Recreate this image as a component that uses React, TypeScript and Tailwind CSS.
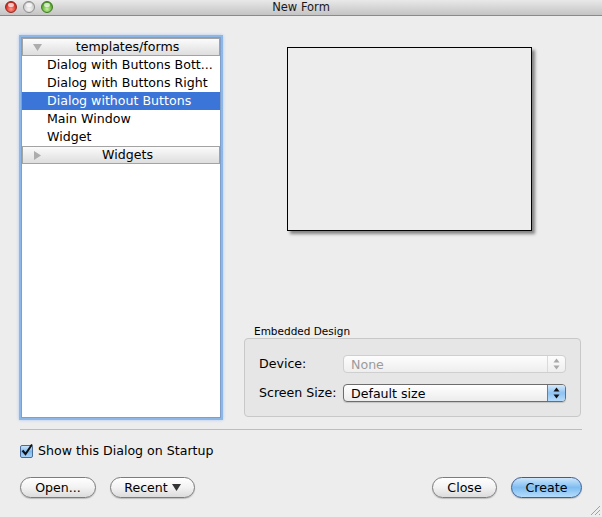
import React from 'react';

const font = { fontFamily: '"DejaVu Sans", "Liberation Sans", sans-serif' };

const Light = ({ tone }: { tone: 'red' | 'grey' | 'green' }) => {
  const bg =
    tone === 'red'
      ? 'bg-[radial-gradient(circle_at_50%_70%,#ff9a8c_0%,#e0362b_55%,#9e1a12_100%)] border-[#8e2a22]'
      : tone === 'green'
      ? 'bg-[radial-gradient(circle_at_50%_70%,#c8f2a0_0%,#66b23a_55%,#3b7a1c_100%)] border-[#3f7a25]'
      : 'bg-[radial-gradient(circle_at_50%_70%,#f4f4f4_0%,#d2d2d2_60%,#a8a8a8_100%)] border-[#8c8c8c]';
  return (
    <div className={`relative w-[12px] h-[12px] rounded-full border ${bg}`}>
      <div className="absolute left-[2px] top-[1px] w-[6px] h-[4px] rounded-full bg-white/70" />
    </div>
  );
};

const Triangle = ({ open }: { open: boolean }) => (
  <svg width="9" height="9" viewBox="0 0 9 9" className="absolute left-[10px] top-[4px]">
    {open ? <polygon points="0,1 9,1 4.5,8" fill="#adadad" /> : <polygon points="1,0 8,4.5 1,9" fill="#adadad" />}
  </svg>
);

const GroupHeader = ({ label, open }: { label: string; open: boolean }) => (
  <div className="relative h-[18px] border border-[#a3a3a3] bg-gradient-to-b from-[#fbfbfb] to-[#dedede] pl-[13px] text-[12.6px] leading-[16px] text-center text-black">
    <Triangle open={open} />
    {label}
  </div>
);

const Row = ({ label, selected }: { label: string; selected?: boolean }) => (
  <div
    className={`h-[18px] pl-[25px] pr-[4px] text-[12.6px] leading-[18px] whitespace-nowrap overflow-hidden ${
      selected ? 'bg-[#3b75d7] text-white' : 'text-black'
    }`}
  >
    {label}
  </div>
);

const Arrows = ({ color }: { color: string }) => (
  <svg width="7" height="12" viewBox="0 0 7 12">
    <polygon points="3.5,0.5 6.5,4.5 0.5,4.5" fill={color} />
    <polygon points="0.5,7.5 6.5,7.5 3.5,11.5" fill={color} />
  </svg>
);

const Combo = ({ value, disabled }: { value: string; disabled?: boolean }) => (
  <div
    className={`flex h-[18px] w-[223px] rounded-[4px] border overflow-hidden ${
      disabled
        ? 'border-[#cfcfcf] bg-gradient-to-b from-[#fdfdfd] to-[#eeeeee]'
        : 'border-[#6d6d6d] bg-gradient-to-b from-white to-[#ececec] shadow-[0_1px_1px_rgba(0,0,0,0.15)]'
    }`}
  >
    <div className={`flex-1 pl-[7px] text-[12.6px] leading-[17px] ${disabled ? 'text-[#9b9b9b]' : 'text-black'}`}>
      {value}
    </div>
    <div
      className={`w-[18px] flex items-center justify-center border-l ${
        disabled
          ? 'border-[#dadada]'
          : 'border-[#5a7fb0] bg-gradient-to-b from-[#d4e9fb] via-[#8fc3f2] to-[#b6dcfb]'
      }`}
    >
      <Arrows color={disabled ? '#a8a8a8' : '#111111'} />
    </div>
  </div>
);

const AquaButton = ({ label, primary, width, children }: { label: string; primary?: boolean; width: string; children?: React.ReactNode }) => (
  <button
    className={`${width} h-[21px] rounded-full border text-[12.6px] leading-[19px] text-black flex items-center justify-center gap-[4px] ${
      primary
        ? 'border-[#3c5f93] bg-gradient-to-b from-[#cde6fb] via-[#7ebdf1] to-[#b5dcfa]'
        : 'border-[#7c7c7c] bg-gradient-to-b from-white via-[#f2f2f2] to-[#dcdcdc]'
    } shadow-[0_1px_1px_rgba(0,0,0,0.2)]`}
  >
    {label}
    {children}
  </button>
);

const App: React.FC = () => {
  return (
    <div className="w-[602px] h-[517px] bg-[#ededed] flex flex-col overflow-hidden relative" style={font}>
      {/* Title bar */}
      <div className="relative h-[16px] flex items-center bg-gradient-to-b from-[#e9e9e9] to-[#c4c4c4] border-b border-[#8a8a8a]">
        <div className="absolute left-[5px] top-[1px] flex gap-[6px]">
          <Light tone="red" />
          <Light tone="grey" />
          <Light tone="green" />
        </div>
        <div className="w-full text-center text-[11.5px] leading-[15px] text-[#1a1a1a]">New Form</div>
      </div>

      {/* Main area */}
      <div className="flex px-[21px] pt-[21px]">
        {/* Template list */}
        <div className="w-[200px] h-[381px] bg-white border border-[#7f9fca] shadow-[0_0_0_2px_#8db7e6,0_0_3px_2px_#a8c9ee] flex flex-col">
          <GroupHeader label="templates/forms" open />
          <Row label="Dialog with Buttons Bott..." />
          <Row label="Dialog with Buttons Right" />
          <Row label="Dialog without Buttons" selected />
          <Row label="Main Window" />
          <Row label="Widget" />
          <GroupHeader label="Widgets" open={false} />
        </div>

        {/* Right side */}
        <div className="ml-[23px] flex-1 flex flex-col justify-between">
          <div className="mt-[10px] ml-[43px] w-[245px] h-[184px] border border-black bg-[#ededed] shadow-[3px_3px_3px_rgba(0,0,0,0.45)]" />

          <div className="mb-[1px]">
            <div className="pl-[10px] text-[10.5px] leading-[13px] text-black">Embedded Design</div>
            <div className="h-[79px] rounded-[4px] border border-[#c8c8c8] bg-[#e6e6e6] pl-[14px] pr-[14px] pt-[16px] flex flex-col gap-[10px]">
              <div className="flex items-center">
                <div className="w-[84px] text-[12.6px] text-black">Device:</div>
                <Combo value="None" disabled />
              </div>
              <div className="flex items-center">
                <div className="w-[84px] text-[12.6px] text-black">Screen Size:</div>
                <Combo value="Default size" />
              </div>
            </div>
          </div>
        </div>
      </div>

      {/* Separator */}
      <div className="mx-[20px] mt-[11px] h-[1px] bg-[#bdbdbd]" />

      {/* Startup checkbox */}
      <div className="flex items-center ml-[20px] mt-[14px] gap-[5px]">
        <div className="w-[13px] h-[13px] rounded-[2px] border border-[#4a6a98] bg-gradient-to-b from-[#c9e3fa] via-[#7db9ee] to-[#a9d4f8] relative">
          <svg width="14" height="14" viewBox="0 0 14 14" className="absolute -left-[1px] -top-[3px]">
            <path d="M2.5 7.5 L5.5 11 L12 1.5" stroke="#111" strokeWidth="2" fill="none" />
          </svg>
        </div>
        <div className="text-[12.6px] leading-[14px] text-black">Show this Dialog on Startup</div>
      </div>

      {/* Buttons */}
      <div className="flex items-center mx-[20px] mt-[19px]">
        <AquaButton label="Open..." width="w-[76px]" />
        <div className="ml-[14px]">
          <AquaButton label="Recent" width="w-[85px]">
            <svg width="9" height="7" viewBox="0 0 9 7">
              <polygon points="0,0 9,0 4.5,7" fill="#333" />
            </svg>
          </AquaButton>
        </div>
        <div className="ml-auto flex gap-[14px]">
          <AquaButton label="Close" width="w-[65px]" />
          <AquaButton label="Create" primary width="w-[71px]" />
        </div>
      </div>

      {/* Resize grip */}
      <svg width="12" height="12" viewBox="0 0 12 12" className="absolute right-[1px] bottom-[1px]">
        <line x1="11" y1="2" x2="2" y2="11" stroke="#a0a0a0" strokeWidth="1" />
        <line x1="11" y1="6" x2="6" y2="11" stroke="#a0a0a0" strokeWidth="1" />
        <line x1="11" y1="10" x2="10" y2="11" stroke="#a0a0a0" strokeWidth="1" />
      </svg>
    </div>
  );
};

export default App;
